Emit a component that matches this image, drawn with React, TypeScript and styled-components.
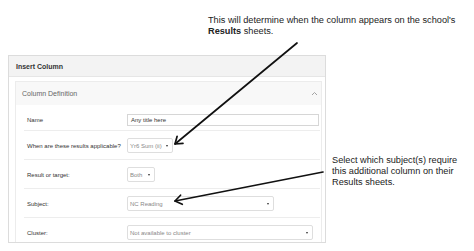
import React from "react";
import styled, { createGlobalStyle } from "styled-components";

const Global = createGlobalStyle`
  html, body { margin: 0; padding: 0; background: #fff; }
  body { width: 474px; height: 251px; overflow: hidden; font-family: "Liberation Sans", Arial, sans-serif; }
`;

const Page = styled.div`
  position: relative;
  width: 474px;
  height: 251px;
  display: flex;
  flex-direction: column;
`;

const TopArea = styled.div`
  height: 55px;
  box-sizing: border-box;
  padding: 15px 0 0 208px;
`;

const Note = styled.div<{ $mt?: number }>`
  font-size: 9.2px;
  line-height: 10.8px;
  color: #222;
  white-space: nowrap;
  margin-top: ${(p) => p.$mt ?? 0}px;
  b { font-weight: bold; }
`;

const MainRow = styled.div`
  display: flex;
  align-items: flex-start;
  padding-left: 8px;
  gap: 6px;
`;

const Panel = styled.section`
  width: 318px;
  height: 188px;
  box-sizing: border-box;
  border: 1px solid #dcdcdc;
  overflow: hidden;
  background: #fff;
`;

const PanelHeader = styled.div`
  height: 21px;
  box-sizing: border-box;
  background: #f3f3f3;
  border-bottom: 1px solid #e6e6e6;
  padding-left: 7px;
  display: flex;
  align-items: center;
  font-size: 7px;
  font-weight: bold;
  color: #333;
`;

const PanelBody = styled.div`
  padding: 4px 3px 0 6px;
`;

const Inner = styled.div`
  border: 1px solid #ececec;
`;

const InnerHeader = styled.div`
  height: 23px;
  background: #f8f8f8;
  display: flex;
  align-items: center;
  justify-content: space-between;
  padding: 0 3px 0 6px;
  font-size: 7px;
  color: #666;
`;

const InnerBody = styled.div`
  padding: 0 1px 0 8px;
`;

const Row = styled.div<{ $pt?: number; $pb?: number }>`
  display: grid;
  grid-template-columns: 100px 1fr;
  align-items: center;
  padding: ${(p) => p.$pt ?? 7}px 0 ${(p) => p.$pb ?? 6}px 3px;
  border-bottom: 1px solid #ededed;
`;

const Label = styled.div`
  font-size: 6px;
  color: #333;
  white-space: nowrap;
`;

const TextInput = styled.div`
  width: 192px;
  height: 12px;
  box-sizing: border-box;
  border: 1px solid #d6d6d6;
  padding-left: 3px;
  display: flex;
  align-items: center;
  font-size: 6px;
  color: #333;
`;

const Select = styled.div<{ $w: number }>`
  width: ${(p) => p.$w}px;
  height: 15px;
  box-sizing: border-box;
  border: 1px solid #dedede;
  border-radius: 2px;
  padding: 0 3px 0 2px;
  display: flex;
  align-items: center;
  justify-content: space-between;
  font-size: 6px;
  color: #888;
`;

const Caret = styled.span`
  width: 0;
  height: 0;
  border-left: 1.5px solid transparent;
  border-right: 1.5px solid transparent;
  border-top: 2.5px solid #333;
  margin-right: 1px;
`;

const Overlay = styled.svg`
  position: absolute;
  left: 0;
  top: 0;
  pointer-events: none;
`;

function Arrow({ x1, y1, x2, y2 }: { x1: number; y1: number; x2: number; y2: number }) {
  const ang = Math.atan2(y1 - y2, x1 - x2);
  const len = 8;
  const spread = (35 * Math.PI) / 180;
  const a = [x2 + len * Math.cos(ang + spread), y2 + len * Math.sin(ang + spread)];
  const b = [x2 + len * Math.cos(ang - spread), y2 + len * Math.sin(ang - spread)];
  return (
    <g stroke="#111" strokeWidth={1.7} fill="none" strokeLinecap="round" strokeLinejoin="round">
      <line x1={x1} y1={y1} x2={x2} y2={y2} />
      <polyline points={`${a[0]},${a[1]} ${x2},${y2} ${b[0]},${b[1]}`} />
    </g>
  );
}

const rows = [
  { label: "When are these results applicable?", value: "Yr6 Sum (ii)", w: 46 },
  { label: "Result or target:", value: "Both", w: 28 },
  { label: "Subject:", value: "NC Reading", w: 147 },
  { label: "Cluster:", value: "Not available to cluster", w: 186 },
];

export default function App() {
  return (
    <Page>
      <Global />
      <TopArea>
        <Note>
          This will determine when the column appears on the school's
          <br />
          <b>Results</b> sheets.
        </Note>
      </TopArea>
      <MainRow>
        <Panel>
          <PanelHeader>Insert Column</PanelHeader>
          <PanelBody>
            <Inner>
              <InnerHeader>
                <span>Column Definition</span>
                <svg width="7" height="5" viewBox="0 0 7 5">
                  <polyline points="1,4 3.5,1.5 6,4" fill="none" stroke="#999" strokeWidth="0.9" />
                </svg>
              </InnerHeader>
              <InnerBody>
                <Row $pt={9} $pb={4}>
                  <Label>Name</Label>
                  <TextInput>Any title here</TextInput>
                </Row>
                {rows.map((r) => (
                  <Row key={r.label}>
                    <Label>{r.label}</Label>
                    <Select $w={r.w}>
                      <span>{r.value}</span>
                      <Caret />
                    </Select>
                  </Row>
                ))}
              </InnerBody>
            </Inner>
          </PanelBody>
        </Panel>
        <Note $mt={100}>
          Select which subject(s) require
          <br />
          this additional column on their
          <br />
          Results sheets.
        </Note>
      </MainRow>
      <Overlay width="474" height="251" viewBox="0 0 474 251">
        <Arrow x1={297} y1={43} x2={175} y2={144} />
        <Arrow x1={323} y1={172} x2={175} y2={201} />
      </Overlay>
    </Page>
  );
}
